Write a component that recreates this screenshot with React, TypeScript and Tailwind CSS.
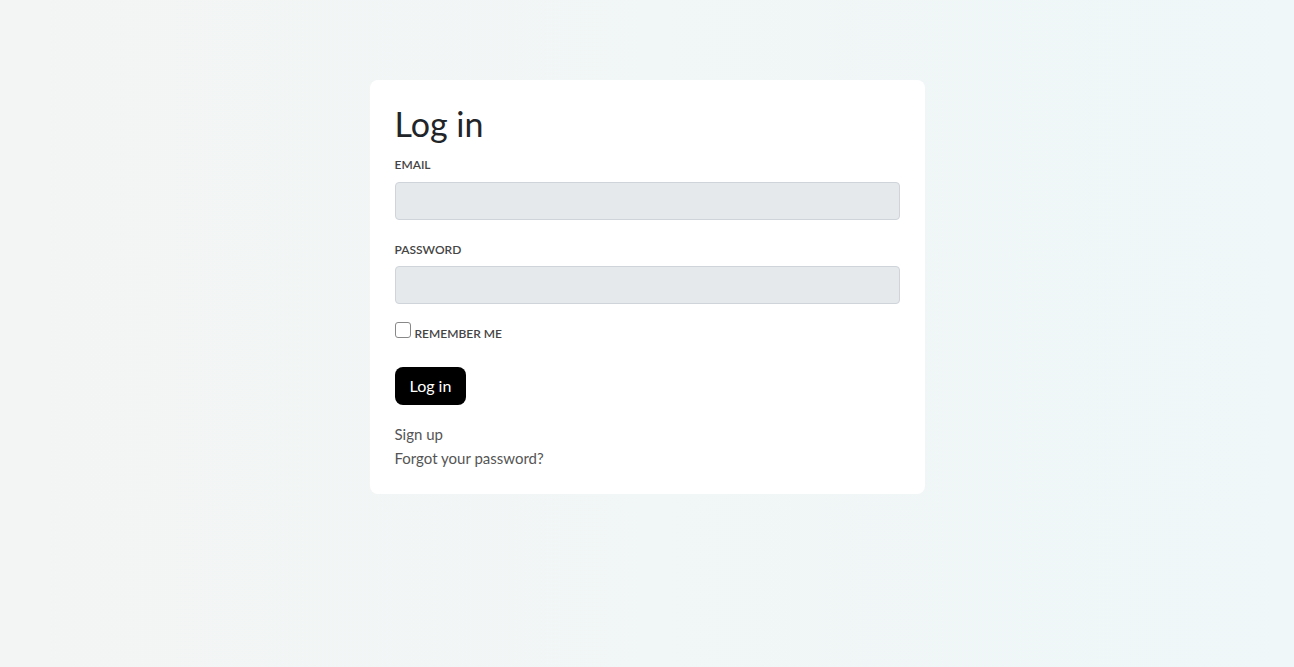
export default function App() {
  return (
    <div
      className="min-h-screen w-full bg-gradient-to-r from-[#f3f5f4] to-[#eff7f8] pt-[80px]"
      style={{ fontFamily: 'Lato, "Open Sans", sans-serif' }}
    >
      <div className="mx-auto w-[555px] rounded-lg bg-white px-[25px] pb-[24px] pt-[22px]">
        <h1 className="text-[34px] leading-[44px] text-[#212529]">Log in</h1>
        <form className="mt-[11px]">
          <label className="block text-[12px] font-semibold leading-[16px] text-[#444]">EMAIL</label>
          <input
            type="email"
            className="mt-[9px] block h-[38px] w-full rounded border border-[#ced4da] bg-[#e6e9ec]"
          />
          <label className="mt-[22px] block text-[12px] font-semibold leading-[16px] text-[#444]">PASSWORD</label>
          <input
            type="password"
            className="mt-[8px] block h-[38px] w-full rounded border border-[#ced4da] bg-[#e6e9ec]"
          />
          <div className="mt-[18px] flex items-start">
            <span className="h-[16px] w-[16px] rounded-[3px] border border-[#888] bg-white" />
            <span className="ml-[4px] mt-[4px] text-[12px] font-semibold leading-[16px] text-[#444]">REMEMBER ME</span>
          </div>
          <button
            type="button"
            className="mt-[25px] h-[38px] rounded-lg bg-black px-[15px] text-[16px] text-white"
          >
            Log in
          </button>
        </form>
        <div className="mt-[17px] text-[15px] leading-[24px] text-[#555]">
          <a className="block">Sign up</a>
          <a className="block">Forgot your password?</a>
        </div>
      </div>
    </div>
  )
}
